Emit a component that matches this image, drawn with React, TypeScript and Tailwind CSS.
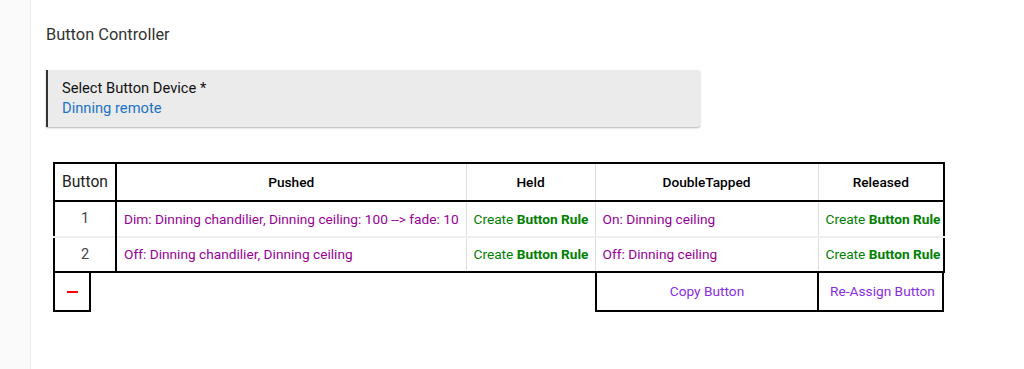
import React from 'react';

const purple = 'text-[#990099]';

function CreateRule() {
    return (
        <span className="text-[#008000]">
            Create <span className="font-bold">Button Rule</span>
        </span>
    );
}

const rows = [
    {
        n: 1,
        pushed: 'Dim: Dinning chandilier, Dinning ceiling: 100 --> fade: 10',
        double: 'On: Dinning ceiling',
    },
    {
        n: 2,
        pushed: 'Off: Dinning chandilier, Dinning ceiling',
        double: 'Off: Dinning ceiling',
    },
];

export default function App() {
    return (
        <div className="flex h-[369px] w-[1024px] bg-white font-['Roboto',sans-serif] text-[#222]">
            <div className="w-[31px] shrink-0 bg-[#fafafa] border-r border-[#ececec]" />
            <div className="flex-1 pl-[15px]">
                <h1 className="pt-[25px] text-[16.4px] leading-[20px] text-[#333]">Button Controller</h1>

                <div className="mt-[25px] w-[654px] h-[57px] bg-[#ebebeb] border-l-2 border-[#333] rounded-r-[3px] shadow-[0_1px_2px_rgba(0,0,0,0.3)] pl-[14px] pt-[9px]">
                    <div className="text-[14.7px] leading-[19px] text-[#111]">Select Button Device *</div>
                    <div className="text-[14.7px] leading-[20px] text-[#1a73c8]">Dinning remote</div>
                </div>

                <div className="mt-[35px] ml-[7px] text-[13.7px]">
                    <table className="border-collapse border-2 border-black table-fixed w-[890px]">
                        <colgroup>
                            <col className="w-[62px]" />
                            <col className="w-[350px]" />
                            <col className="w-[129px]" />
                            <col className="w-[223px]" />
                            <col className="w-[126px]" />
                        </colgroup>
                        <thead>
                            <tr className="h-[38px] border-b-2 border-black">
                                <th className="font-normal text-[15.6px] pt-[2px] border-r-2 border-black text-[#222]">Button</th>
                                <th className="font-medium pt-[1px] border-r border-[#ddd] text-black">Pushed</th>
                                <th className="font-medium pt-[1px] border-r border-[#ddd] text-black">Held</th>
                                <th className="font-medium pt-[1px] border-r border-[#ddd] text-black">DoubleTapped</th>
                                <th className="font-medium pt-[1px] text-black">Released</th>
                            </tr>
                        </thead>
                        <tbody>
                            {rows.map((r, i) => (
                                <tr key={r.n} className={i === 0 ? 'h-[36px] border-b-2 border-[#eee]' : 'h-[35px]'}>
                                    <td className="text-center text-[14.5px] text-[#444] border-r-2 border-black">{r.n}</td>
                                    <td className={`${purple} pl-[7px] whitespace-nowrap border-r border-[#ddd]`}>{r.pushed}</td>
                                    <td className="pl-[7px] whitespace-nowrap border-r border-[#ddd]"><CreateRule /></td>
                                    <td className={`${purple} pl-[7px] whitespace-nowrap border-r border-[#ddd]`}>{r.double}</td>
                                    <td className="pl-[7px] whitespace-nowrap overflow-hidden"><CreateRule /></td>
                                </tr>
                            ))}
                        </tbody>
                    </table>
                    <div className="flex h-[39px]">
                        <div className="w-[38px] border-2 border-t-0 border-black flex items-center justify-center">
                            <span className="block w-[11px] h-[2px] bg-[#ff0000]" />
                        </div>
                        <div className="w-[504px]" />
                        <div className="w-[224px] border-2 border-t-0 border-black flex items-center justify-center text-[#8a2be2]">
                            Copy Button
                        </div>
                        <div className="w-[125px] pl-[4px] border-2 border-t-0 border-l-0 border-black flex items-center justify-center text-[#8a2be2]">
                            Re-Assign Button
                        </div>
                    </div>
                </div>
            </div>
        </div>
    );
}
